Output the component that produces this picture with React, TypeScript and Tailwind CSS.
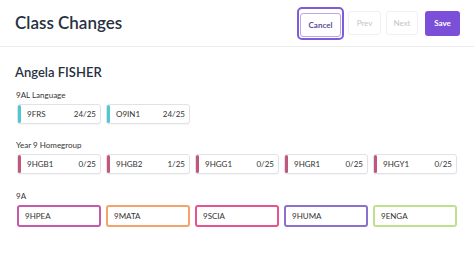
import React from 'react';

type Chip = { code: string; count?: string; color: string };

const language: Chip[] = [
  { code: '9FRS', count: '24/25', color: 'bg-[#4fc8d4]' },
  { code: 'O9IN1', count: '24/25', color: 'bg-[#4fc8d4]' },
];

const homegroup: Chip[] = [
  { code: '9HGB1', count: '0/25', color: 'bg-[#c0587c]' },
  { code: '9HGB2', count: '1/25', color: 'bg-[#c0587c]' },
  { code: '9HGG1', count: '0/25', color: 'bg-[#c0587c]' },
  { code: '9HGR1', count: '0/25', color: 'bg-[#c0587c]' },
  { code: '9HGY1', count: '0/25', color: 'bg-[#c0587c]' },
];

const classes = [
  { code: '9HPEA', border: 'border-[#c75aa8]' },
  { code: '9MATA', border: 'border-[#f5a36c]' },
  { code: '9SCIA', border: 'border-[#e6558d]' },
  { code: '9HUMA', border: 'border-[#8c70cc]' },
  { code: '9ENGA', border: 'border-[#bfe08f]' },
];

function BarChip({ chip }: { chip: Chip }) {
  return (
    <div className="w-[84px] h-[20px] flex items-center border border-[#e2e2e6] rounded-[3px] bg-white shadow-[0_1px_1px_rgba(0,0,0,0.04)]">
      <div className={`w-[3px] h-[18px] rounded-[2px] ${chip.color}`} />
      <span className="ml-[6px] text-[8px] text-[#333]">{chip.code}</span>
      <span className="ml-auto mr-[4px] text-[8px] text-[#333]">{chip.count}</span>
    </div>
  );
}

export default function App() {
  return (
    <div className="w-[474px] h-[255px] bg-white overflow-hidden" style={{ fontFamily: 'Lato, "Open Sans", sans-serif' }}>
      <header className="h-[47px] border-b border-[#ececef] flex items-center pl-[15px] pr-[14px]">
        <h1 className="text-[17px] font-semibold text-[#283142]">Class Changes</h1>
        <div className="ml-auto flex items-center gap-[4px]">
          <div className="rounded-[5px] border-2 border-[#7d5cd6] p-[1px]">
            <button className="h-[24px] w-[41px] rounded-[3px] border border-[#b9a7e8] text-[8px] font-bold text-[#5d4a9c]">Cancel</button>
          </div>
          <button className="h-[24px] w-[33px] rounded-[3px] border border-[#f0f0f2] text-[8px] text-[#c4c4c8]">Prev</button>
          <button className="h-[24px] w-[32px] rounded-[3px] border border-[#f0f0f2] text-[8px] text-[#c4c4c8] ml-[1px]">Next</button>
          <button className="h-[25px] w-[35px] rounded-[3px] bg-[#7b4fd8] text-[8px] font-bold text-white ml-[3px]">Save</button>
        </div>
      </header>

      <main className="pl-[17px] pt-[16px]">
        <h2 className="-ml-[2px] text-[13px] leading-[18px] font-semibold text-[#283142]">Angela FISHER</h2>

        <div className="mt-[8px] -ml-[1px] text-[8px] leading-[12px] text-[#333]">9AL Language</div>
        <div className="mt-[3px] flex gap-[5px]">
          {language.map(c => <BarChip key={c.code} chip={c} />)}
        </div>

        <div className="mt-[15px] -ml-[1px] text-[8px] leading-[12px] text-[#333]">Year 9 Homegroup</div>
        <div className="mt-[3px] flex gap-[5px]">
          {homegroup.map(c => <BarChip key={c.code} chip={c} />)}
        </div>

        <div className="mt-[16px] -ml-[1px] text-[8px] leading-[12px] text-[#333]">9A</div>
        <div className="mt-[3px] flex gap-[5px]">
          {classes.map(c => (
            <div key={c.code} className={`w-[84px] h-[22px] flex items-center border-2 rounded-[3px] bg-white ${c.border}`}>
              <span className="ml-[6px] text-[8px] text-[#333]">{c.code}</span>
            </div>
          ))}
        </div>
      </main>
    </div>
  );
}
